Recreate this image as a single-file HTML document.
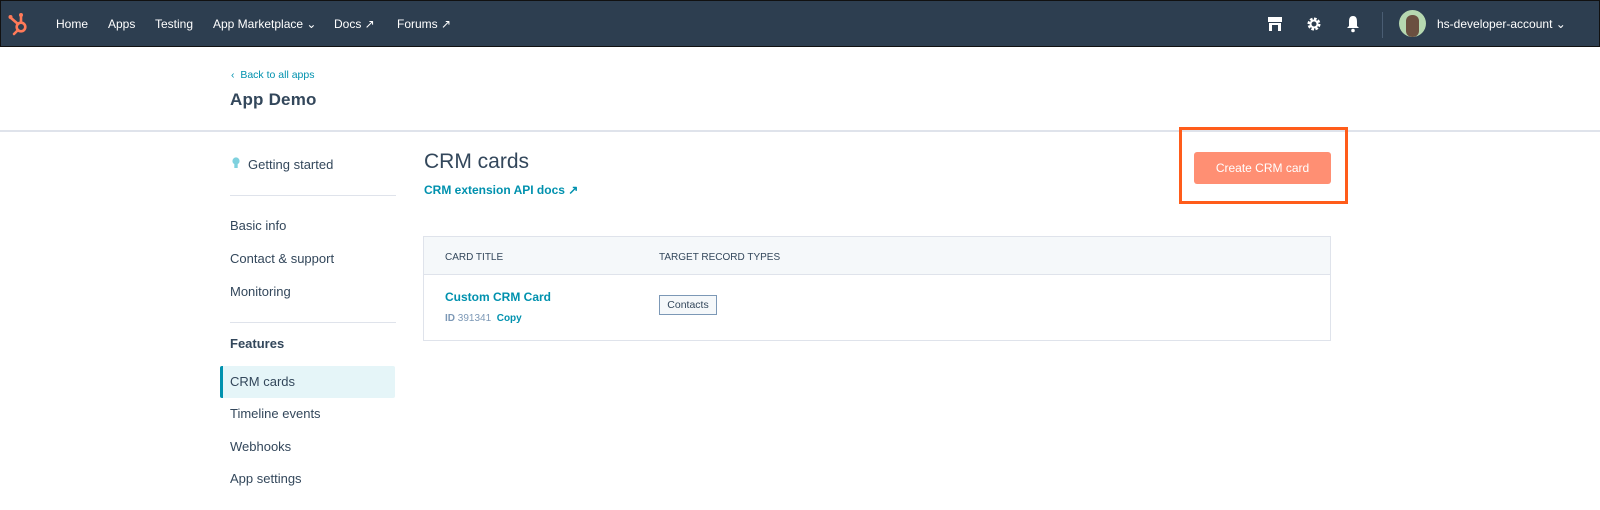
<!DOCTYPE html>
<html><head><style>
*{box-sizing:border-box;margin:0;padding:0}
body{width:1600px;height:510px;background:#fff;font-family:"Liberation Sans",sans-serif;color:#33475b;position:relative;overflow:hidden}
.nav{position:absolute;left:0;top:0;width:1600px;height:47px;background:#2d3e50;border:1px solid #111;}
.nav a{position:absolute;top:16px;color:#fff;font-size:12px;}
.abs{position:absolute}
.side{position:absolute;left:230px;font-size:13px;color:#33475b}
.hr{position:absolute;height:1px;background:#dfe3eb}
</style></head><body>
<div class="nav">
<svg class="abs" style="left:6px;top:10px" width="24" height="26" viewBox="0 0 24 26"><g stroke="#ff7a59" stroke-width="2.6" fill="none" stroke-linecap="round"><circle cx="14" cy="16" r="4.3"/><line x1="14" y1="11" x2="14" y2="5"/><line x1="11" y1="13" x2="4" y2="7"/><line x1="11" y1="19" x2="7" y2="23"/></g><circle cx="14" cy="4" r="2" fill="#ff7a59"/><circle cx="3.5" cy="6" r="2" fill="#ff7a59"/></svg>
<a style="left:55px">Home</a><a style="left:107px">Apps</a><a style="left:154px">Testing</a><a style="left:212px">App Marketplace ⌄</a><a style="left:333px">Docs ↗</a><a style="left:396px">Forums ↗</a>
<svg class="abs" style="left:1266px;top:15px" width="16" height="16" viewBox="0 0 16 16" fill="#fff"><rect x="1" y="1" width="14" height="5"/><rect x="2" y="7" width="12" height="8"/><rect x="5" y="9" width="6" height="6" fill="#2d3e50"/></svg>
<svg class="abs" style="left:1305px;top:15px" width="16" height="16" viewBox="0 0 16 16"><circle cx="8" cy="8" r="5" fill="none" stroke="#fff" stroke-width="3" stroke-dasharray="2.5 1.4"/><circle cx="8" cy="8" r="3.5" fill="none" stroke="#fff" stroke-width="2"/></svg>
<svg class="abs" style="left:1344px;top:14px" width="16" height="18" viewBox="0 0 16 18" fill="#fff"><path d="M8 1C4.5 1 4 4 4 7v4L2 13h12l-2-2V7C12 4 11.5 1 8 1z"/><circle cx="8" cy="15.5" r="1.8"/></svg>
<div class="abs" style="left:1381px;top:11px;width:1px;height:26px;background:#4a5d73"></div>
<div class="abs" style="left:1398px;top:9px;width:27px;height:27px;border-radius:50%;background:#b6d8b0;overflow:hidden"><div style="margin:5px 0 0 7px;width:13px;height:22px;border-radius:6px;background:#6b5040"></div></div>
<a style="left:1436px">hs-developer-account ⌄</a>
</div>
<div class="abs" style="left:231px;top:69px;font-size:10.5px;color:#0091ae">‹ &nbsp;Back to all apps</div>
<div class="abs" style="left:230px;top:90px;font-size:17px;color:#33475b;font-weight:bold;letter-spacing:0.2px">App Demo</div>
<div class="hr" style="left:0;top:130px;width:1600px;height:2px"></div>
<svg class="abs" style="left:232px;top:157px" width="8" height="12" viewBox="0 0 8 12"><circle cx="4" cy="4" r="3.6" fill="#7fd1de"/><rect x="2.3" y="7" width="3.4" height="4" fill="#7fd1de"/></svg>
<div class="side" style="top:157px">&nbsp;&nbsp;&nbsp;&nbsp;&nbsp;Getting started</div>
<div class="hr" style="left:230px;top:195px;width:166px"></div>
<div class="side" style="top:218px">Basic info</div>
<div class="side" style="top:251px">Contact &amp; support</div>
<div class="side" style="top:284px">Monitoring</div>
<div class="hr" style="left:230px;top:322px;width:166px"></div>
<div class="side" style="top:336px;font-weight:bold">Features</div>
<div class="abs" style="left:220px;top:366px;width:175px;height:32px;background:#e5f5f8;border-left:3px solid #0091ae;border-radius:2px"></div>
<div class="side" style="top:374px">CRM cards</div>
<div class="side" style="top:406px">Timeline events</div>
<div class="side" style="top:439px">Webhooks</div>
<div class="side" style="top:471px">App settings</div>
<div class="abs" style="left:424px;top:150px;font-size:21px;color:#33475b">CRM cards</div>
<div class="abs" style="left:424px;top:183px;font-size:12px;color:#0091ae;font-weight:bold">CRM extension API docs ↗</div>
<div class="abs" style="left:1179px;top:127px;width:169px;height:77px;border:3px solid #ff5c1a"></div>
<div class="abs" style="left:1194px;top:152px;width:137px;height:32px;background:#ff8f73;border-radius:3px;color:#fff;font-size:12px;text-align:center;line-height:32px">Create CRM card</div>
<div class="abs" style="left:423px;top:236px;width:908px;height:105px;border:1px solid #dfe3eb">
<div style="height:38px;background:#f5f8fa;border-bottom:1px solid #dfe3eb;font-size:10px;color:#33475b;position:relative">
<span class="abs" style="left:21px;top:15px">CARD TITLE</span><span class="abs" style="left:235px;top:15px">TARGET RECORD TYPES</span></div>
<span class="abs" style="left:21px;top:53px;font-size:12px;color:#0091ae;font-weight:bold">Custom CRM Card</span>
<span class="abs" style="left:21px;top:76px;font-size:10px;color:#7c98b6"><b>ID</b> 391341 &nbsp;<b style="color:#0091ae">Copy</b></span>
<span class="abs" style="left:235px;top:58px;width:58px;height:20px;border:1px solid #7c98b6;background:#f5f8fa;font-size:10.5px;text-align:center;line-height:18px;color:#33475b">Contacts</span>
</div>
</body></html>
